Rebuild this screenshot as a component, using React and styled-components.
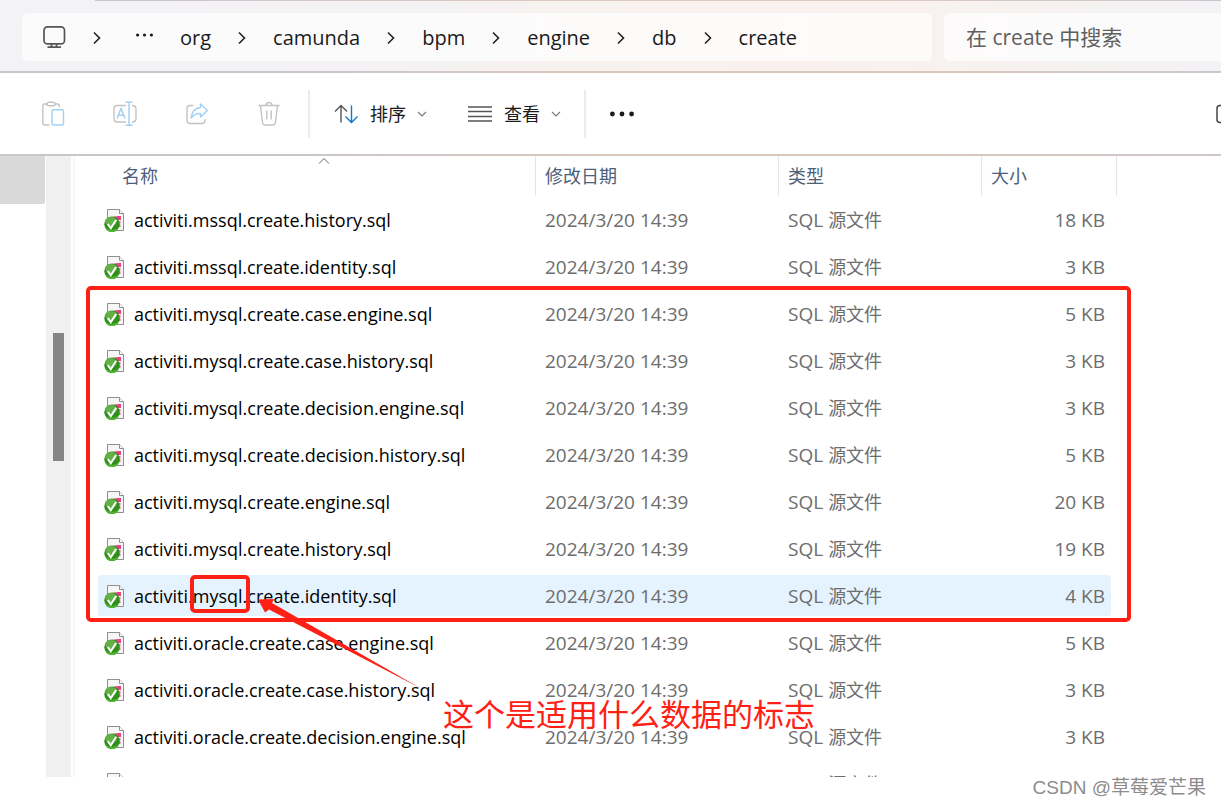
import React from 'react';
import styled, { createGlobalStyle } from 'styled-components';

const FONT = '"Open Sans", "Noto Sans CJK SC", sans-serif';

const GlobalStyle = createGlobalStyle`
  * {
    box-sizing: border-box;
  }

  body {
    margin: 0;
    background: #fff;
    color: #1a1a1a;
    font-family: ${FONT};
  }

  button,
  input {
    font-family: inherit;
  }
`;

const Window = styled.main`
  display: flex;
  flex-direction: column;
  height: 100vh;
  min-width: 1100px;
  overflow: hidden;
`;

const NavBar = styled.header`
  align-items: flex-start;
  background: linear-gradient(90deg, #f3f2f6 0%, #f4f2f5 30%, #f8f2ee 50%, #faf1ee 65%, #f7f2f0 82%, #f3f2f5 100%);
  border-bottom: 2px solid;
  border-image: linear-gradient(90deg, #c9c5cb 0%, #cbc5ca 25%, #d8c7bb 50%, #d8c7bb 75%, #cdc6c9 100%) 1;
  display: flex;
  flex: none;
  gap: 12px;
  height: 73px;
  padding: 13px 0 0 22px;
  position: relative;

  &::before {
    background: linear-gradient(90deg, #c9c5cb, #dccac1 40%, #dccac1 70%, #cdc6c9);
    content: '';
    height: 1px;
    left: 95px;
    position: absolute;
    right: 0;
    top: 0;
  }
`;

const AddressBar = styled.nav`
  align-items: center;
  background: rgba(255, 255, 255, 0.7);
  border-radius: 6px;
  display: flex;
  flex: 1;
  height: 48px;
  padding: 2px 0 0 20px;
`;

const Crumb = styled.a`
  color: #1a1a1a;
  font-size: 20px;
  line-height: 28px;
  text-decoration: none;
`;

const CrumbChevron = styled.svg`
  flex: none;
  margin: 0 27px;
`;

const MoreCrumbs = styled.button`
  background: none;
  border: 0;
  display: flex;
  margin: 0 27px 0 8px;
  padding: 0 0 6px;
`;

const Search = styled.input`
  background: rgba(255, 255, 255, 0.7);
  border: 0;
  border-radius: 6px 0 0 6px;
  color: #5f5f5f;
  flex: none;
  font-size: 21px;
  height: 48px;
  outline: 0;
  padding: 0 22px;
  width: 277px;

  &::placeholder {
    color: #5f5f5f;
    opacity: 1;
  }
`;

const Toolbar = styled.div`
  align-items: center;
  border-bottom: 2px solid;
  border-image: linear-gradient(90deg, #c9c5cb 0%, #cbc5ca 25%, #d8c7bb 50%, #d8c7bb 75%, #cdc6c9 100%) 1;
  display: flex;
  flex: none;
  height: 83px;
  overflow: hidden;
  padding: 1px 0 0 41px;
`;

const IconButton = styled.button`
  background: none;
  border: 0;
  display: flex;
  margin-right: 48px;
  padding: 0;
`;

const MenuButton = styled.button`
  align-items: center;
  background: none;
  border: 0;
  color: #1a1a1a;
  display: flex;
  font-size: 18px;
  font-weight: 400;
  gap: 11px;
  line-height: 24px;
  margin-left: ${(props) => props.$gap}px;
  padding: 0;
`;

const Divider = styled.span`
  background: #ececec;
  height: 48px;
  margin-left: ${(props) => props.$gap}px;
  width: 2px;
`;

const PreviewButton = styled.button`
  background: none;
  border: 0;
  display: flex;
  margin: 0 -17px 0 auto;
  padding: 0;
`;

const Body = styled.div`
  display: flex;
  flex: 1;
  margin-bottom: 29px;
  min-height: 0;
`;

const TreePane = styled.div`
  flex: none;
  width: 46px;
`;

const TreeItem = styled.div`
  background: #d9d9d9;
  border-radius: 0 0 2px 0;
  height: 48px;
  width: 45px;
`;

const ScrollTrack = styled.div`
  background: #f0f0f0;
  flex: none;
  padding: 177px 7px 0;
  width: 25px;
`;

const ScrollThumb = styled.div`
  background: #858585;
  height: 128px;
`;

const ListPane = styled.section`
  border-left: 2px solid #f7f7f7;
  flex: 1;
  margin-left: 2px;
  min-width: 0;
  padding: 0 104px 0 23px;
  position: relative;
`;

const Clip = styled.div`
  height: 100%;
  overflow: hidden;
`;

const Table = styled.table`
  border-collapse: separate;
  border-spacing: 0;
  table-layout: fixed;
  width: 100%;
`;

const HeadCell = styled.th`
  border-right: 1px solid #e5e5e5;
  color: #4c607a;
  font-size: 18px;
  font-weight: 400;
  height: 40px;
  line-height: 24px;
  padding: 0 0 0 ${(props) => props.$indent || 9}px;
  position: relative;
  text-align: left;
`;

const SortMark = styled.svg`
  left: 220px;
  position: absolute;
  top: 1px;
`;

const Cell = styled.td`
  height: 47px;
  padding: 3px 0;
`;

const CellBody = styled.div`
  align-items: center;
  background: ${(props) => (props.$selected ? '#e5f3ff' : 'transparent')};
  border-radius: ${(props) => (props.$right ? '0 3px 3px 0' : 0)};
  color: #6d6d6d;
  display: flex;
  font-size: 19px;
  gap: 5px;
  height: 41px;
  justify-content: ${(props) => (props.$right ? 'flex-end' : 'flex-start')};
  line-height: 24px;
  margin-right: ${(props) => (props.$right ? 6 : 0)}px;
  padding: 0 ${(props) => (props.$right ? 6 : 0)}px 0 9px;
  white-space: nowrap;
`;

const NameBody = styled(CellBody)`
  border-radius: 3px 0 0 3px;
  color: #000;
  font-size: 18px;
  gap: 9px;
  padding-left: 6px;
`;

const Cjk = styled.span`
  font-size: 18px;
`;

const MarkBox = styled.div`
  border: 4px solid #ff2015;
  border-radius: 5px;
  height: 336px;
  left: 11px;
  pointer-events: none;
  position: absolute;
  right: 90px;
  top: 130px;
`;

const WordBox = styled(MarkBox)`
  height: 38px;
  left: 115px;
  right: auto;
  top: 419px;
  width: 60px;
`;

const Arrow = styled.svg`
  left: 183px;
  pointer-events: none;
  position: absolute;
  top: 442px;
`;

const Note = styled.p`
  color: #ff2015;
  font-size: 31px;
  left: 368px;
  line-height: 40px;
  margin: 0;
  position: absolute;
  top: 538px;
  white-space: nowrap;
`;

const Watermark = styled.footer`
  bottom: 4px;
  color: #8c8c8c;
  font-family: "Liberation Sans", "Noto Sans CJK SC", sans-serif;
  font-size: 19px;
  line-height: 28px;
  position: absolute;
  right: 15px;
`;

const crumbs = ['org', 'camunda', 'bpm', 'engine', 'db', 'create'];

const files = [
  { name: 'activiti.mssql.create.history.sql', size: 18 },
  { name: 'activiti.mssql.create.identity.sql', size: 3 },
  { name: 'activiti.mysql.create.case.engine.sql', size: 5 },
  { name: 'activiti.mysql.create.case.history.sql', size: 3 },
  { name: 'activiti.mysql.create.decision.engine.sql', size: 3 },
  { name: 'activiti.mysql.create.decision.history.sql', size: 5 },
  { name: 'activiti.mysql.create.engine.sql', size: 20 },
  { name: 'activiti.mysql.create.history.sql', size: 19 },
  { name: 'activiti.mysql.create.identity.sql', size: 4, selected: true },
  { name: 'activiti.oracle.create.case.engine.sql', size: 5 },
  { name: 'activiti.oracle.create.case.history.sql', size: 3 },
  { name: 'activiti.oracle.create.decision.engine.sql', size: 3 },
];

const Chevron = () => (
  <CrumbChevron width="8" height="14" viewBox="0 0 8 14" fill="none" stroke="#222" strokeWidth="1.6">
    <path d="M1 1.5 6.5 7 1 12.5" />
  </CrumbChevron>
);

const Caret = () => (
  <svg width="10" height="6" viewBox="0 0 10 6" fill="none" stroke="#777" strokeWidth="1.1">
    <path d="M1 1l4 4 4-4" />
  </svg>
);

const Dots = ({ width, r }) => (
  <svg width={width} height="6" viewBox={`0 0 ${width} 6`} fill="#1a1a1a">
    <circle cx={r} cy="3" r={r} />
    <circle cx={width / 2} cy="3" r={r} />
    <circle cx={width - r} cy="3" r={r} />
  </svg>
);

const FileIcon = () => (
  <svg width="21" height="24" viewBox="0 0 21 24">
    <path d="M3.5 1.5h12l4 4v17h-16z" fill="#f6f6f6" stroke="#8f8f8f" />
    <path d="M15.5 1.500v4h4" fill="#fff" stroke="#8f8f8f" />
    <path d="M7 9.500q4-2 10-1.500v4H7z" fill="#e0447e" />
    <path d="M12 13h4.500v2.500H12zM12 16.500h4.500V19H12z" fill="#e36a95" />
    <circle cx="8" cy="16.200" r="7.700" fill="#2f8f1a" />
    <ellipse cx="7" cy="13.500" rx="5.800" ry="4.600" fill="#63b046" />
    <path d="M8 23.900a7.700 7.700 0 0 0 7-5q-3 3-7 3t-7-3a7.700 7.700 0 0 0 7 5z" fill="#4bb52c" />
    <path d="M3.800 16.200l3 4 5.400-8.500" fill="none" stroke="#fff" strokeWidth="2" />
  </svg>
);

const App = () => {
  return (
    <Window>
      <GlobalStyle />
      <NavBar>
        <AddressBar aria-label="路径">
          <svg width="24" height="24" viewBox="0 0 24 24" fill="none" stroke="#555" strokeWidth="1.7">
            <rect x="2" y="0.900" width="20.500" height="17" rx="3.500" />
            <path d="M9.500 18v3M14.500 18v3M5.500 21.200h13.500" />
          </svg>
          <Chevron />
          <MoreCrumbs aria-label="更多">
            <Dots width={17} r={1.6} />
          </MoreCrumbs>
          {crumbs.map((crumb, i) => (
            <React.Fragment key={crumb}>
              {i > 0 && <Chevron />}
              <Crumb href="#">{crumb}</Crumb>
            </React.Fragment>
          ))}
        </AddressBar>
        <Search type="search" aria-label="搜索" placeholder="在 create 中搜索" />
      </NavBar>

      <Toolbar>
        <IconButton aria-label="粘贴">
          <svg width="24" height="26" viewBox="0 0 24 26" fill="none" stroke="#c3c3c3" strokeWidth="1.4">
            <path d="M6 3H3.500Q1.800 3 1.800 4.700v17.600Q1.800 24 3.500 24H8.500M14 3h2.500q1.800 0 1.800 1.700V6" />
            <rect x="6" y="1.200" width="8" height="3.600" rx="1.800" />
            <rect x="11" y="8.800" width="11.500" height="15.200" rx="1.500" stroke="#9fd0f2" />
          </svg>
        </IconButton>
        <IconButton aria-label="重命名">
          <svg width="24" height="26" viewBox="0 0 24 26" fill="none" stroke="#c3c3c3" strokeWidth="1.4">
            <path d="M13 21H4.500Q1 21 1 17.500V8q0-3.500 3.500-3.500H13M19 4.500q4 0 4 3.500v9.500q0 3.500-4 3.500" />
            <path d="M4 17.500l4-10 4 10M5.500 14.200h5M12.500 1.200h7M16 1.200v23M12.500 24.200h7" stroke="#9fd0f2" />
          </svg>
        </IconButton>
        <IconButton aria-label="共享">
          <svg width="24" height="26" viewBox="0 0 24 26" fill="none" stroke="#c3c3c3" strokeWidth="1.4">
            <path d="M8.500 4.500H5Q2 4.500 2 7.500v12q0 3 3 3h12q3 0 3-3V18" />
            <path d="M15.500 3l6.800 6.500-6.800 6.500v-3.500q-6-.5-9.500 4.500Q7 7.500 15.500 6.500z" stroke="#9fd0f2" strokeLinejoin="round" />
          </svg>
        </IconButton>
        <IconButton aria-label="删除">
          <svg width="24" height="26" viewBox="0 0 24 26" fill="none" stroke="#c3c3c3" strokeWidth="1.4">
            <path d="M1.500 4.500h21M9 4.500Q9 1.500 12 1.500t3 3M3.500 4.500l2 17q.3 2.500 2.500 2.500h8q2.200 0 2.500-2.500l2-17M9.800 9.500v9M14.200 9.500v9" />
          </svg>
        </IconButton>
        <Divider $gap={-21} />
        <MenuButton $gap={24}>
          <svg width="25" height="20" viewBox="0 0 25 20" fill="none" stroke="#555" strokeWidth="1.4">
            <path d="M7 18.500V1.500M1 7.500l6-6 6 6" />
            <path d="M17.500 1.500v17M11.500 12.500l6 6 6-6" stroke="#0a78d4" />
          </svg>
          排序
          <Caret />
        </MenuButton>
        <MenuButton $gap={41}>
          <svg width="25" height="18" viewBox="0 0 25 18" stroke="#555" strokeWidth="1.4">
            <path d="M0 2h24M0 6.500h24M0 11.500h24M0 16h24" />
          </svg>
          查看
          <Caret />
        </MenuButton>
        <Divider $gap={23} />
        <MenuButton $gap={24} aria-label="更多选项">
          <Dots width={24} r={2.4} />
        </MenuButton>
        <PreviewButton aria-label="预览">
          <svg width="22" height="20" viewBox="0 0 22 20" fill="none" stroke="#444" strokeWidth="1.500">
            <rect x="1" y="1.500" width="20" height="17" rx="3" />
          </svg>
        </PreviewButton>
      </Toolbar>

      <Body>
        <TreePane>
          <TreeItem />
        </TreePane>
        <ScrollTrack>
          <ScrollThumb />
        </ScrollTrack>
        <ListPane>
          <Clip>
            <Table>
              <colgroup>
                <col />
                <col width="243" />
                <col width="203" />
                <col width="135" />
              </colgroup>
              <thead>
                <tr>
                  <HeadCell $indent={24}>
                    名称
                    <SortMark width="12" height="8" viewBox="0 0 12 8" fill="none" stroke="#666">
                      <path d="M1 6.500l5-5 5 5" />
                    </SortMark>
                  </HeadCell>
                  <HeadCell>修改日期</HeadCell>
                  <HeadCell>类型</HeadCell>
                  <HeadCell>大小</HeadCell>
                </tr>
              </thead>
              <tbody>
                {files.map((file) => (
                  <tr key={file.name}>
                    <Cell>
                      <NameBody $selected={file.selected}>
                        <FileIcon />
                        {file.name}
                      </NameBody>
                    </Cell>
                    <Cell>
                      <CellBody $selected={file.selected}>2024/3/20 14:39</CellBody>
                    </Cell>
                    <Cell>
                      <CellBody $selected={file.selected}>
                        SQL <Cjk>源文件</Cjk>
                      </CellBody>
                    </Cell>
                    <Cell>
                      <CellBody $selected={file.selected} $right>
                        {file.size} KB
                      </CellBody>
                    </Cell>
                  </tr>
                ))}
                <tr>
                  <Cell>
                    <NameBody>
                      <FileIcon />
                    </NameBody>
                  </Cell>
                  <Cell />
                  <Cell>
                    <CellBody>
                      SQL <Cjk>源文件</Cjk>
                    </CellBody>
                  </Cell>
                  <Cell />
                </tr>
              </tbody>
            </Table>
          </Clip>
          <MarkBox />
          <WordBox />
          <Arrow width="166" height="94" viewBox="0 0 166 94" fill="#ff2015">
            <path d="M0 1.500l16-.5-2 4 149 85.500-152-79-4 3z" />
          </Arrow>
          <Note>这个是适用什么数据的标志</Note>
        </ListPane>
      </Body>
      <Watermark>CSDN @草莓爱芒果</Watermark>
    </Window>
  );
};

export default App;
